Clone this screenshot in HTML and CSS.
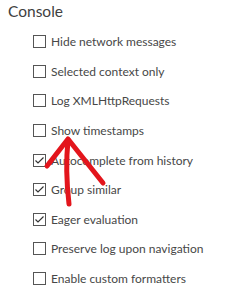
FILE: index.html
```html
<!DOCTYPE html>
<html>
<head>
<meta charset="utf-8">
<link rel="stylesheet" href="styles.css">
</head>
<body>
<div class="panel">
  <h2 class="title">Console</h2>
  <ul class="opts">
    <li class="opt"><span class="box"></span><span class="label">Hide network messages</span></li>
    <li class="opt"><span class="box"></span><span class="label">Selected context only</span></li>
    <li class="opt"><span class="box"></span><span class="label">Log XMLHttpRequests</span></li>
    <li class="opt"><span class="box"></span><span class="label">Show timestamps</span></li>
    <li class="opt"><span class="box checked"><svg viewBox="0 0 13 13" width="13" height="13"><path d="M2.5 6.5 L5 9 L10.5 3.5" fill="none" stroke="#333" stroke-width="1.2"/></svg></span><span class="label">Autocomplete from history</span></li>
    <li class="opt"><span class="box checked"><svg viewBox="0 0 13 13" width="13" height="13"><path d="M2.5 6.5 L5 9 L10.5 3.5" fill="none" stroke="#333" stroke-width="1.2"/></svg></span><span class="label">Group similar</span></li>
    <li class="opt"><span class="box checked"><svg viewBox="0 0 13 13" width="13" height="13"><path d="M2.5 6.5 L5 9 L10.5 3.5" fill="none" stroke="#333" stroke-width="1.2"/></svg></span><span class="label">Eager evaluation</span></li>
    <li class="opt"><span class="box"></span><span class="label">Preserve log upon navigation</span></li>
    <li class="opt"><span class="box"></span><span class="label">Enable custom formatters</span></li>
  </ul>
  <svg class="arrow" viewBox="0 0 230 300" width="230" height="300">
    <g fill="none" stroke="#e3151c" stroke-width="5" stroke-linecap="round" stroke-linejoin="round">
      <path d="M47 166 L68 139 L103 183"/>
      <path d="M68 140 Q65 170 69 204"/>
    </g>
  </svg>
</div>
</body>
</html>
```
FILE: styles.css
```css
html, body {
  margin: 0;
  padding: 0;
  background: #fff;
}
body {
  font-family: Lato, "Open Sans", sans-serif;
  color: #444;
}
.panel {
  position: relative;
  width: 230px;
  height: 300px;
  overflow: hidden;
}
.title {
  margin: 0;
  padding: 1px 0 0 8px;
  font-size: 15.5px;
  font-weight: 400;
  line-height: 20px;
  color: #404040;
}
.opts {
  list-style: none;
  margin: 0;
  padding: 6px 0 0 33px;
}
.opt {
  display: flex;
  align-items: center;
  gap: 5px;
  height: 29.6px;
}
.box {
  width: 11px;
  height: 11px;
  border: 1px solid #555;
  flex: none;
  position: relative;
}
.box svg {
  position: absolute;
  left: -1px;
  top: -1px;
}
.label {
  font-size: 12px;
  color: #474747;
  white-space: nowrap;
}
.arrow {
  position: absolute;
  left: 0;
  top: 0;
  pointer-events: none;
}
```
